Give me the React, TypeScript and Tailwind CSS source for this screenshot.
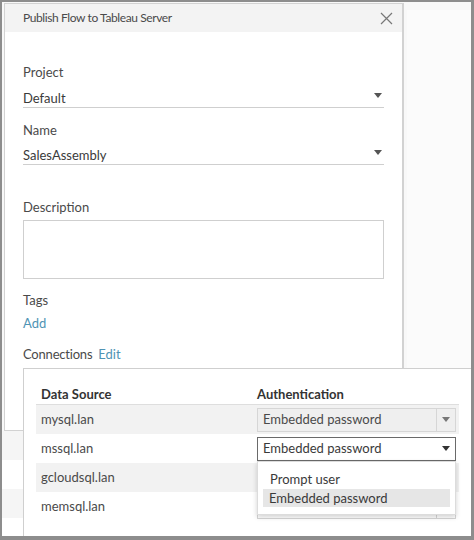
import { ReactNode } from 'react'

const rows = [
  { name: 'mysql.lan', shaded: true, state: 'disabled' },
  { name: 'mssql.lan', shaded: false, state: 'open' },
  { name: 'gcloudsql.lan', shaded: true, state: 'covered' },
  { name: 'memsql.lan', shaded: false, state: 'covered' },
]

function Caret({ className = '' }: { className?: string }) {
  return (
    <svg width="8" height="5" viewBox="0 0 8 5" className={className} aria-hidden>
      <path d="M0 0 L8 0 L4 5 Z" fill="currentColor" />
    </svg>
  )
}

function CloseIcon() {
  return (
    <svg width="13" height="13" viewBox="0 0 13 13" fill="none" aria-hidden>
      <path d="M1 1 L12 12 M12 1 L1 12" stroke="#777" strokeWidth="1.2" />
    </svg>
  )
}

function Label({ children, className = '' }: { children: ReactNode; className?: string }) {
  return <div className={`h-[18px] leading-[18px] text-[#4a4a4a] ${className}`}>{children}</div>
}

function Field({ value, className = '' }: { value: string; className?: string }) {
  return (
    <div className={`flex h-[19px] items-start justify-between border-b border-[#cfcfcf] ${className}`}>
      <span className="leading-[18px] text-[#3a3a3a]">{value}</span>
      <Caret className="mr-[2px] mt-[4px] text-[#555]" />
    </div>
  )
}

function AuthSelect({ state }: { state: string }) {
  if (state === 'open') {
    return (
      <div className="relative">
        <div className="flex h-[24px] w-[199px] items-center justify-between border border-[#6a6a6a] bg-white pl-[5px] pr-[5px]">
          <span className="text-[#3a3a3a]">Embedded password</span>
          <Caret className="text-[#333]" />
        </div>
        <div className="absolute left-0 top-full z-10 w-[199px] border border-[#dcdcdc] bg-white pb-[7px] pt-[8px] shadow-[0_2px_5px_rgba(0,0,0,0.18)]">
          <div className="h-[19px] pl-[12px] leading-[18px] text-[#3a3a3a]">Prompt user</div>
          <div className="mx-[5px] h-[18px] bg-[#e6e6e6] pl-[6px] leading-[18px] text-[#3a3a3a]">Embedded password</div>
        </div>
      </div>
    )
  }
  const disabled = state === 'disabled'
  return (
    <div
      className={`flex h-[24px] w-[199px] items-stretch border border-[#d6d6d6] ${disabled ? 'bg-[#efefef]' : 'bg-white'}`}
    >
      <span className="flex flex-1 items-center pl-[5px] text-[#4a4a4a]">{disabled ? 'Embedded password' : ''}</span>
      <span className="flex w-[19px] items-center justify-center border-l border-[#d6d6d6]">
        <Caret className="text-[#777]" />
      </span>
    </div>
  )
}

export default function App() {
  return (
    <div className="relative h-[540px] w-[474px] overflow-hidden border-2 border-b-[4px] border-r-[3px] border-[#8d8d8d] bg-[#f8f8f8] font-['Lato',sans-serif] text-[13px] text-[#333]">
      <div className="flex">
        <div className="ml-[2px] mt-[1px] flex h-[428px] w-[400px] flex-col border border-r-2 border-[#d2d2d2] bg-white">
          <div className="flex h-[28px] items-center justify-between bg-[#f3f3f3] pl-[18px] pr-[9px]">
            <span className="text-[12px] tracking-[-0.4px] text-[#4a4a4a]">Publish Flow to Tableau Server</span>
            <CloseIcon />
          </div>
          <div className="flex flex-col pl-[18px] pr-[18px] pt-[31px]">
            <Label>Project</Label>
            <Field value="Default" className="mt-[8px]" />
            <Label className="mt-[13px]">Name</Label>
            <Field value="SalesAssembly" className="mt-[7px]" />
            <Label className="mt-[33px]">Description</Label>
            <div className="mt-[4px] h-[59px] border border-[#cfcfcf]" />
            <Label className="mt-[12px]">Tags</Label>
            <div className="mt-[5px] h-[18px] leading-[18px] text-[#4f93b4]">Add</div>
            <div className="mt-[13px] flex h-[18px] gap-[6px] leading-[18px]">
              <span className="tracking-[-0.2px] text-[#4a4a4a]">Connections</span>
              <span className="text-[#4f93b4]">Edit</span>
            </div>
          </div>
        </div>
        <div className="ml-[3px] mt-[8px] h-[358px] flex-1 bg-[#fbfbfb]" />
      </div>
      <div className="flex flex-col">
        <div className="h-[29px] bg-[#f5f5f5]" />
        <div className="h-[29px] bg-white" />
        <div className="h-[29px] bg-[#f5f5f5]" />
        <div className="h-[29px] bg-white" />
      </div>

      <div className="absolute left-[21px] top-[366px] h-[171px] w-[449px] border border-[#cfcfcf] bg-white px-[12px] pt-[16px]">
        <div className="grid grid-cols-[221px_202px]">
          <div className="h-[20px] border-b border-[#dedede] pl-[5px] font-bold leading-[18px] text-[#333]">Data Source</div>
          <div className="h-[20px] border-b border-[#dedede] font-bold leading-[18px] text-[#333]">Authentication</div>
          {rows.map((r) => (
            <div key={r.name} className={`col-span-2 grid h-[29px] grid-cols-[221px_202px] items-center ${r.shaded ? 'bg-[#f2f2f2]' : 'bg-white'}`}>
              <span className="pl-[5px] text-[#4a4a4a]">{r.name}</span>
              <div className={r.state === 'open' ? 'relative z-10' : ''}>
                <AuthSelect state={r.state} />
              </div>
            </div>
          ))}
        </div>
      </div>
    </div>
  )
}
